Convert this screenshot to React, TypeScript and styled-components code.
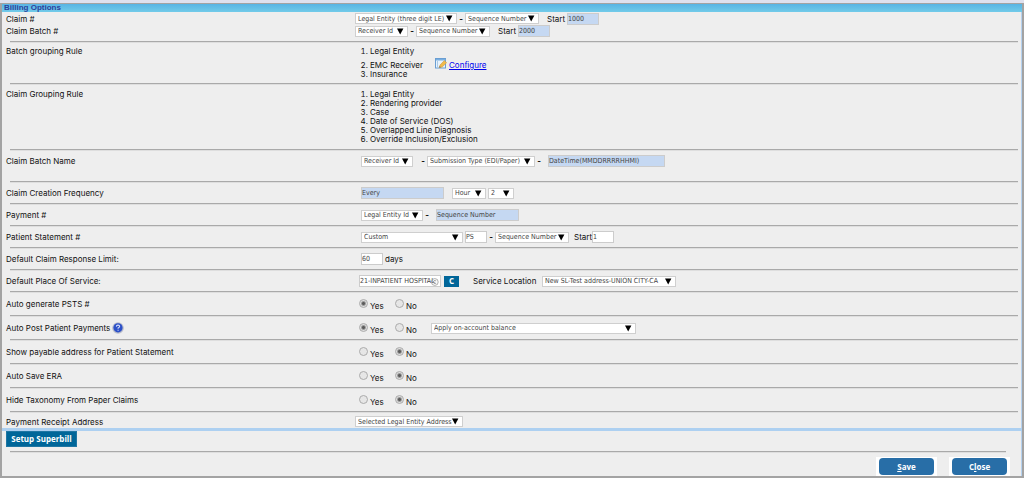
import React, { useId } from "react";
import styled, { createGlobalStyle, css } from "styled-components";

const GlobalStyle = createGlobalStyle`
  * { box-sizing: border-box; }
  body {
    margin: 0;
    background: #eeeeee;
    color: #111111;
    font: 8px/10px Inter, "Liberation Sans", Arial, sans-serif;
  }
`;

const fieldFont = `7px/8px "DejaVu Sans Condensed", "Noto Sans", sans-serif`;

const Page = styled.main`
  border-top: 3px solid #dfe1ee;
`;

const Frame = styled.form`
  border: solid #a3a3a3;
  border-width: 1px 2px 2px;
  box-shadow: inset -1px 0 #b5d2f0;
`;

const TitleBar = styled.h1`
  margin: 0;
  padding: 0 2px 1px;
  background: linear-gradient(#58b4e4, #72cbe9);
  color: #2a3f9c;
  font-family: "Liberation Sans", Arial, sans-serif;
  font-size: 8px;
  line-height: 7px;
`;

const Divider = styled.hr<{ $inset?: number }>`
  height: 2px;
  margin: 0 ${(p) => p.$inset ?? 4}px 0 8px;
  border: 0;
  border-top: 1px solid #a9a9a9;
  border-bottom: 1px solid #dedede;
`;

const Row = styled.div<{ $height: number; $top?: number }>`
  display: grid;
  grid-template-columns: 349px 1fr;
  align-items: ${(p) => (p.$top === undefined ? "center" : "start")};
  min-height: ${(p) => p.$height}px;
  padding: ${(p) => p.$top ?? 0}px 4px 0 4px;
`;

const Caption = styled.div`
  display: flex;
  align-items: center;
  gap: 2px;
  min-height: 12px;
`;

const Controls = styled.div<{ $indent?: number }>`
  display: flex;
  align-items: center;
  padding-left: ${(p) => p.$indent ?? 6}px;
`;

const Gap = styled.span<{ $w: number }>`
  flex: none;
  width: ${(p) => p.$w}px;
`;

const Dash = styled.span`
  flex: none;
  width: 8px;
  text-align: center;
  font-weight: bold;
`;

const StartLabel = styled.label<{ $w?: number }>`
  flex: none;
  width: ${(p) => p.$w ?? 20}px;
`;

const ServiceLabel = styled.label`
  flex: none;
  width: 69px;
`;

const Field = styled.input<{ $w: number; $tone?: "blue" }>`
  flex: none;
  width: ${(p) => p.$w}px;
  height: 12px;
  padding: 0;
  border: 1px solid #cccccc;
  background: ${(p) => (p.$tone ? "#c5d8f2" : "#ffffff")};
  color: #444444;
  font: ${fieldFont};
`;

const SelectBox = styled.span<{ $w: number }>`
  position: relative;
  flex: none;
  display: flex;
  width: ${(p) => p.$w}px;

  select {
    appearance: none;
    width: 100%;
    height: 11px;
    padding: 0 0 0 2px;
    border: 1px solid #cfcfcf;
    border-radius: 0;
    background: #ffffff;
    color: #444444;
    font: ${fieldFont};
  }

  svg {
    position: absolute;
    top: 2px;
    right: 4px;
    pointer-events: none;
  }
`;

const SearchField = styled.span`
  position: relative;
  display: flex;

  svg {
    position: absolute;
    top: 3px;
    right: 2px;
  }
`;

const blueButton = css`
  border: 0;
  background: #006699;
  color: #ffffff;
  font: bold 8px/10px "Open Sans", sans-serif;
`;

const ClearButton = styled.button`
  ${blueButton}
  width: 15px;
  height: 11px;
  padding: 0;
`;

const SuperbillButton = styled.button`
  ${blueButton}
  width: 71px;
  height: 16px;
  padding: 0;
  border: 1px solid #1f76a3;
`;

const Options = styled.fieldset`
  display: flex;
  gap: 10px;
  min-width: 0;
  margin: 0;
  padding: 0;
  border: 0;
`;

const Option = styled.label`
  display: flex;
  align-items: flex-start;
  gap: 2px;
  width: 26px;

  span { padding-top: 3px; }
`;

const Radio = styled.input`
  appearance: none;
  flex: none;
  width: 9px;
  height: 9px;
  margin: 1px 0 0;
  border: 1px solid #ababab;
  border-radius: 50%;
  background: #e6e6e6;

  &:checked {
    background: radial-gradient(circle, #5c5c5c 0 1px, #dedede 3px);
  }
`;

const Rules = styled.ol`
  margin: 0;
  padding: 2px 0 0 15px;
  line-height: 9px;
`;

const ConfigureItem = styled.li`
  padding-top: 5px;

  a {
    margin-left: 2px;
    color: #0000ee;
  }

  svg {
    margin: -6px 0 0 12px;
    vertical-align: -1px;
  }
`;

const Footer = styled.footer`
  border-top: 3px solid #add0f1;
  padding: 0 0 0 4px;
`;

const FooterLine = styled(Divider)`
  margin: 4px 16px 0 4px;
`;

const Actions = styled.div`
  display: flex;
  justify-content: flex-end;
  gap: 12px;
  padding: 4px 12px 0 0;
`;

const ActionButton = styled.button`
  width: 61px;
  height: 19px;
  padding: 0;
  border: solid #ffffff;
  border-width: 1px 3px;
  background: #ffffff;
  color: #ffffff;
  font: bold 8px/17px "Open Sans", sans-serif;

  span {
    display: block;
    border-radius: 4px;
    background: #286ea7;
  }
`;

function Arrow() {
  return (
    <svg width="7" height="7" viewBox="0 0 7 7" aria-hidden="true">
      <path d="M0 0.5H6.4L3.2 6.6Z" fill="#000" />
    </svg>
  );
}

function Select({ w, label, id, value }: { w: number; label: string; id?: string; value: string }) {
  return (
    <SelectBox $w={w}>
      <select id={id} aria-label={id ? undefined : label}>
        <option>{value}</option>
      </select>
      <Arrow />
    </SelectBox>
  );
}

function YesNo({ label, initial }: { label: string; initial: "Yes" | "No" }) {
  const name = useId();
  return (
    <Options aria-label={label}>
      {["Yes", "No"].map((v) => (
        <Option key={v}>
          <Radio type="radio" name={name} value={v} defaultChecked={v === initial} />
          <span>{v}</span>
        </Option>
      ))}
    </Options>
  );
}

function HelpIcon() {
  return (
    <svg width="12" height="12" viewBox="0 0 13 13" role="img" aria-label="Help">
      <circle cx="6.5" cy="6.5" r="6.3" fill="#b9bdca" />
      <circle cx="6.5" cy="6.3" r="5" fill="#2c50c8" />
      <path d="M4.7 5Q4.8 3.4 6.5 3.4T8.3 4.9Q8.2 5.8 6.6 6.6V7.4M6.6 8.4V9.5" fill="none" stroke="#d5defa" strokeWidth="1.2" />
    </svg>
  );
}

function EditIcon() {
  return (
    <svg width="12" height="11" viewBox="0 0 12 11" aria-hidden="true">
      <rect x="0.5" y="0.5" width="10" height="9.5" fill="#e9f3fc" stroke="#6a9ed2" />
      <path d="M1 1H10.5V2.5H1Z" fill="#79afe1" />
      <path d="M2.5 3V9.5" stroke="#a9cae8" />
      <path d="M4.3 9.6L5 7L9.3 2.6L11.6 4.7L7.2 9Z" fill="#f2bb4c" stroke="#c99a48" strokeWidth="0.6" />
      <path d="M4.3 9.6L4.7 8.2L5.8 9.2Z" fill="#444" />
    </svg>
  );
}

function LookupIcon() {
  return (
    <svg width="9" height="8" viewBox="0 0 9 8" aria-hidden="true">
      <circle cx="4.8" cy="4" r="3.4" fill="none" stroke="#999" strokeWidth="0.8" />
      <path d="M6.2 2.8Q3.3 1.9 3.3 4T6.2 5.3" fill="none" stroke="#888" strokeWidth="0.8" />
    </svg>
  );
}

const claimRules = [
  "Legal Entity",
  "Rendering provider",
  "Case",
  "Date of Service (DOS)",
  "Overlapped Line Diagnosis",
  "Override Inclusion/Exclusion",
];

const toggles = ["Show payable address for Patient Statement", "Auto Save ERA", "Hide Taxonomy From Paper Claims"];

export default function App() {
  return (
    <Page>
      <GlobalStyle />
      <Frame onSubmit={(e) => e.preventDefault()}>
        <TitleBar>Billing Options</TitleBar>

        <Row $height={13}>
          <Caption>Claim #</Caption>
          <Controls $indent={0}>
            <Select w={102} label="Claim number prefix" value="Legal Entity (three digit LE)" />
            <Dash>-</Dash>
            <Select w={74} label="Claim number suffix" value="Sequence Number" />
            <Gap $w={8} />
            <StartLabel htmlFor="claim-start">Start</StartLabel>
            <Field id="claim-start" $w={32} $tone="blue" defaultValue="1000" />
          </Controls>
        </Row>
        <Row $height={16} $top={0}>
          <Caption>Claim Batch #</Caption>
          <Controls $indent={0}>
            <Select w={53} label="Claim batch prefix" value="Receiver Id" />
            <Dash>-</Dash>
            <Select w={74} label="Claim batch suffix" value="Sequence Number" />
            <Gap $w={8} />
            <StartLabel htmlFor="batch-start">Start</StartLabel>
            <Field id="batch-start" $w={32} $tone="blue" defaultValue="2000" />
          </Controls>
        </Row>
        <Divider />

        <Row $height={40} $top={2}>
          <Caption>Batch grouping Rule</Caption>
          <Rules>
            <li>Legal Entity</li>
            <ConfigureItem>
              EMC Receiver
              <EditIcon />
              <a href="#configure">Configure</a>
            </ConfigureItem>
            <li>Insurance</li>
          </Rules>
        </Row>
        <Divider />

        <Row $height={64} $top={3}>
          <Caption>Claim Grouping Rule</Caption>
          <Rules>
            {claimRules.map((r) => (
              <li key={r}>{r}</li>
            ))}
          </Rules>
        </Row>
        <Divider />

        <Row $height={30} $top={4}>
          <Caption>Claim Batch Name</Caption>
          <Controls>
            <Select w={52} label="Batch name prefix" value="Receiver Id" />
            <Gap $w={6} />
            <Dash>-</Dash>
            <Select w={108} label="Submission type" value="Submission Type (EDI/Paper)" />
            <Dash>-</Dash>
            <Gap $w={5} />
            <Field aria-label="Batch name timestamp" $w={117} $tone="blue" defaultValue="DateTime(MMDDRRRRHHMI)" />
          </Controls>
        </Row>
        <Divider />

        <Row $height={20}>
          <Caption>
            <label htmlFor="frequency">Claim Creation Frequency</label>
          </Caption>
          <Controls>
            <Field id="frequency" $w={83} $tone="blue" defaultValue="Every" />
            <Gap $w={8} />
            <Select w={34} label="Frequency unit" value="Hour" />
            <Gap $w={2} />
            <Select w={26} label="Frequency count" value="2" />
          </Controls>
        </Row>
        <Divider />

        <Row $height={20}>
          <Caption>Payment #</Caption>
          <Controls>
            <Select w={62} label="Payment prefix" value="Legal Entity Id" />
            <Dash>-</Dash>
            <Gap $w={5} />
            <Field aria-label="Payment sequence" $w={83} $tone="blue" defaultValue="Sequence Number" />
          </Controls>
        </Row>
        <Divider />

        <Row $height={20}>
          <Caption>Patient Statement #</Caption>
          <Controls>
            <Select w={102} label="Statement format" value="Custom" />
            <Gap $w={2} />
            <Field aria-label="Statement prefix" $w={22} defaultValue="PS" />
            <Dash>-</Dash>
            <Select w={74} label="Statement suffix" value="Sequence Number" />
            <Gap $w={5} />
            <StartLabel $w={18} htmlFor="statement-start">Start</StartLabel>
            <Field id="statement-start" $w={22} defaultValue="1" />
          </Controls>
        </Row>
        <Divider />

        <Row $height={20}>
          <Caption>
            <label htmlFor="limit">Default Claim Response Limit:</label>
          </Caption>
          <Controls>
            <Field id="limit" $w={22} defaultValue="60" />
            <Gap $w={2} />
            days
          </Controls>
        </Row>
        <Divider />

        <Row $height={20}>
          <Caption>
            <label htmlFor="place">Default Place Of Service:</label>
          </Caption>
          <Controls $indent={4}>
            <SearchField>
              <Field id="place" $w={82} defaultValue="21-INPATIENT HOSPITAL" />
              <LookupIcon />
            </SearchField>
            <Gap $w={3} />
            <ClearButton type="button" aria-label="Clear place of service">C</ClearButton>
            <Gap $w={14} />
            <ServiceLabel htmlFor="location">Service Location</ServiceLabel>
            <Select w={134} id="location" label="Service Location" value="New SL-Test address-UNION CITY-CA" />
          </Controls>
        </Row>
        <Divider />

        <Row $height={22}>
          <Caption>Auto generate PSTS #</Caption>
          <Controls $indent={4}>
            <YesNo label="Auto generate PSTS #" initial="Yes" />
          </Controls>
        </Row>
        <Divider />

        <Row $height={22}>
          <Caption>
            Auto Post Patient Payments
            <HelpIcon />
          </Caption>
          <Controls $indent={4}>
            <YesNo label="Auto Post Patient Payments" initial="Yes" />
            <Gap $w={10} />
            <Select w={205} label="Payment posting method" value="Apply on-account balance" />
          </Controls>
        </Row>
        <Divider />

        {toggles.map((t) => (
          <React.Fragment key={t}>
            <Row $height={22}>
              <Caption>{t}</Caption>
              <Controls $indent={4}>
                <YesNo label={t} initial="No" />
              </Controls>
            </Row>
            <Divider />
          </React.Fragment>
        ))}

        <Row $height={15} $top={3}>
          <Caption>
            <label htmlFor="receipt">Payment Receipt Address</label>
          </Caption>
          <Controls $indent={0}>
            <Select w={108} id="receipt" label="Payment Receipt Address" value="Selected Legal Entity Address" />
          </Controls>
        </Row>

        <Footer>
          <SuperbillButton type="button">Setup Superbill</SuperbillButton>
          <FooterLine />
          <Actions>
            <ActionButton type="submit">
              <span><u>S</u>ave</span>
            </ActionButton>
            <ActionButton type="button">
              <span>C<u>l</u>ose</span>
            </ActionButton>
          </Actions>
        </Footer>
      </Frame>
    </Page>
  );
}
